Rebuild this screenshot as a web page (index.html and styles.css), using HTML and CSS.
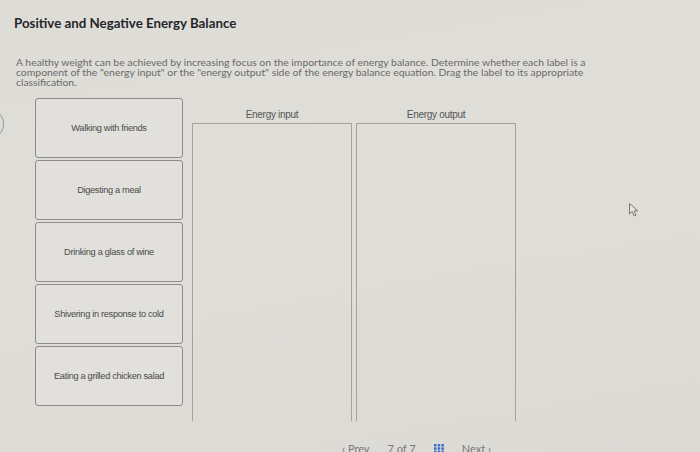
FILE: index.html
```html
<!DOCTYPE html>
<html>
<head>
  <link rel="stylesheet" href="styles.css">
</head>
<body>
  <div class="page">
    <h1 class="title">Positive and Negative Energy Balance</h1>
    <p class="intro">A healthy weight can be achieved by increasing focus on the importance of energy balance. Determine whether each label is a component of the "energy input" or the "energy output" side of the energy balance equation. Drag the label to its appropriate classification.</p>

    <div class="board">
      <div class="labels">
        <div class="label">Walking with friends</div>
        <div class="label">Digesting a meal</div>
        <div class="label">Drinking a glass of wine</div>
        <div class="label">Shivering in response to cold</div>
        <div class="label">Eating a grilled chicken salad</div>
      </div>

      <div class="zones">
        <div class="zone">
          <div class="zone-title">Energy input</div>
          <div class="zone-box"></div>
        </div>
        <div class="zone">
          <div class="zone-title">Energy output</div>
          <div class="zone-box"></div>
        </div>
      </div>
    </div>

    <div class="pager">
      <span class="pager-link">&lsaquo; Prev</span>
      <span class="pager-count">7 of 7</span>
      <svg class="pager-grid" width="10" height="9" viewBox="0 0 10 9">
        <rect x="0" y="0" width="2.5" height="2.5"/><rect x="3.7" y="0" width="2.5" height="2.5"/><rect x="7.4" y="0" width="2.5" height="2.5"/>
        <rect x="0" y="3.3" width="2.5" height="2.5"/><rect x="3.7" y="3.3" width="2.5" height="2.5"/><rect x="7.4" y="3.3" width="2.5" height="2.5"/>
        <rect x="0" y="6.6" width="2.5" height="2.5"/><rect x="3.7" y="6.6" width="2.5" height="2.5"/><rect x="7.4" y="6.6" width="2.5" height="2.5"/>
      </svg>
      <span class="pager-link">Next &rsaquo;</span>
    </div>
  </div>

  <!-- edge of the side tab peeking in -->
  <div class="side-tab"></div>

  <!-- mouse pointer -->
  <svg class="pointer" width="14" height="16" viewBox="0 0 14 16">
    <path d="M1.5 1.5 L1.5 12 L4.2 9.6 L6.2 14 L8 13.2 L6.1 8.9 L9.8 8.9 Z" fill="#e6e5e1" stroke="#77766f" stroke-width="1" stroke-linejoin="round"/>
  </svg>
</body>
</html>
```

FILE: styles.css
```css
body {
  margin: 0;
  height: 452px;
  overflow: hidden;
  background: linear-gradient(170deg, #dddcd7 0%, #dfded9 45%, #dcdad5 100%);
  font-family: Lato, "Liberation Sans", sans-serif;
  color: #333;
}

.page {
  padding: 15px 0 0 14px;
}

.title {
  margin: 0;
  font-size: 13.3px;
  font-weight: 700;
  line-height: 16px;
  color: #26262a;
}

.intro {
  margin: 26px 0 0 2px;
  width: 580px;
  font-size: 10.4px;
  line-height: 10px;
  color: #6b6a68;
}

.board {
  display: flex;
  align-items: flex-start;
  margin-top: 11px;
  padding-left: 21px;
}

.labels {
  display: flex;
  flex-direction: column;
  gap: 2px;
  width: 148px;
}

.label {
  height: 60px;
  box-sizing: border-box;
  border: 1px solid #8d8c88;
  border-radius: 3px;
  background: #e1e0dc;
  display: flex;
  align-items: center;
  justify-content: center;
  font-family: "Liberation Sans", Arial, sans-serif;
  font-size: 9.2px;
  letter-spacing: -0.3px;
  color: #4a4a4a;
}

.zones {
  display: flex;
  gap: 4px;
  margin-left: 9px;
  margin-top: 10px;
}

.zone {
  width: 160px;
}

.zone-title {
  height: 15px;
  text-align: center;
  font-family: "Liberation Sans", Arial, sans-serif;
  font-size: 10px;
  letter-spacing: -0.3px;
  line-height: 14px;
  color: #555;
}

.zone-box {
  height: 297px;
  border: 1px solid #a3a29d;
  border-bottom: none;
}

.pager {
  display: flex;
  align-items: center;
  gap: 18px;
  margin-top: 21px;
  padding-left: 328px;
  font-size: 11px;
  color: #77767a;
}

.pager-grid {
  fill: #3e6fc4;
}

.side-tab {
  position: absolute;
  left: -10px;
  top: 113px;
  width: 12px;
  height: 20px;
  border: 1px solid #9a9994;
  border-radius: 50%;
}

.pointer {
  position: absolute;
  left: 628px;
  top: 202px;
}
```
